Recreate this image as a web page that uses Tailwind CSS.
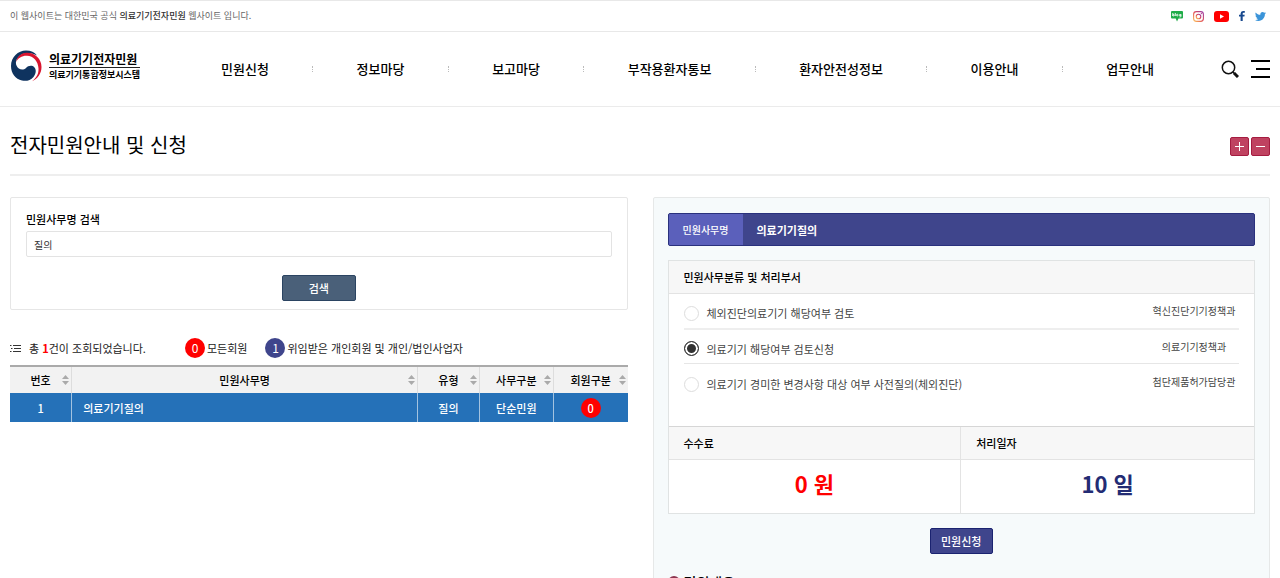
<!DOCTYPE html>
<html lang="ko">
<head>
  <meta charset="UTF-8">
  <meta name="viewport" content="width=device-width, initial-scale=1.0">
  <title>의료기기전자민원</title>
  <script src="https://cdn.jsdelivr.net/npm/@tailwindcss/browser@4"></script>
</head>
<body class="h-screen overflow-hidden bg-white font-['Noto_Sans_CJK_KR',sans-serif] text-[11px] leading-4 text-[#222]">

  <!-- top bar -->
  <div class="flex h-8 items-center justify-between border-t border-b border-t-[#e8e8e8] border-b-[#e8e8e8] pr-3.5 pl-2.5">
    <p class="text-[9px] text-[#666]">이 웹사이트는 대한민국 공식 <strong class="font-medium text-[#333]">의료기기전자민원</strong> 웹사이트 입니다.</p>
    <div class="flex items-center gap-2.5">
      <a href="#" aria-label="블로그">
        <svg class="h-3 w-3" viewBox="0 0 12 12"><path fill="#21ac49" d="M1 1h10q1 0 1 1v5.500q0 1-1 1H7.500L6 11.500 4.700 8.500H1q-1 0-1-1V2q0-1 1-1z"/><g fill="none" stroke="#fff" stroke-width=".9"><path d="M1.800 3v3M4.300 3v3"/><circle cx="2.600" cy="5.200" r=".7"/><circle cx="6.300" cy="5.100" r=".8"/><path d="M9.900 4.200v2.200q0 .8-1.400.6"/><circle cx="9.100" cy="5.100" r=".7"/></g></svg>
      </a>
      <a href="#" aria-label="인스타그램">
        <svg class="h-[11px] w-[11px]" viewBox="0 0 11 11" fill="none"><defs><linearGradient id="insta" x1="0" y1="1" x2="1" y2="0"><stop offset="0" stop-color="#fdc35b"/><stop offset=".5" stop-color="#df4b55"/><stop offset="1" stop-color="#963aa8"/></linearGradient></defs><rect x=".6" y=".6" width="9.800" height="9.800" rx="2.800" stroke="url(#insta)" stroke-width="1.100"/><circle cx="5.500" cy="5.500" r="2.300" stroke="url(#insta)" stroke-width="1.100"/><circle cx="8.400" cy="2.600" r=".7" fill="#b23b94"/></svg>
      </a>
      <a href="#" aria-label="유튜브">
        <svg class="h-[11px] w-[15px]" viewBox="0 0 15 11"><rect width="15" height="11" rx="3" fill="#f00"/><path fill="#fff" d="M6 3.200v4.600l4-2.300z"/></svg>
      </a>
      <a href="#" aria-label="페이스북">
        <svg class="h-2.5 w-1.5" viewBox="0 0 6 10"><path fill="#17488e" d="M1.600 10V5.600H0V3.800h1.600V2.500Q1.600 0 4 0h1.800v1.700H4.600q-.9 0-.9.900v1.200h2l-.3 1.800H3.700V10z"/></svg>
      </a>
      <a href="#" aria-label="트위터">
        <svg class="h-[11px] w-[11px]" viewBox="0 0 24 24"><path fill="#3b94d9" d="M23.950 4.570a10 10 0 0 1-2.820.77 4.960 4.960 0 0 0 2.160-2.720c-.95.550-2 .96-3.130 1.180a4.920 4.920 0 0 0-8.380 4.480C7.690 8.100 4.070 6.130 1.640 3.160a4.920 4.920 0 0 0 1.520 6.570 4.900 4.900 0 0 1-2.230-.61v.06a4.920 4.920 0 0 0 3.950 4.830 5 5 0 0 1-2.210.08 4.940 4.940 0 0 0 4.600 3.420A9.870 9.870 0 0 1 0 19.540a14 14 0 0 0 7.550 2.210c9.050 0 14-7.500 14-13.980l-.02-.64a9.940 9.940 0 0 0 2.420-2.560z"/></svg>
      </a>
    </div>
  </div>

  <!-- header -->
  <header class="flex h-[75px] items-center border-b border-[#ebebeb] px-2.5">
    <a href="#" class="flex w-[143px] items-center gap-[7px] pb-1.5 text-black">
      <svg class="h-8 w-8 shrink-0" viewBox="0 0 32 32">
        <path fill="#0f335f" d="M1 16C1 7 8 .5 16 .5c5 0 8.500 1.800 11 5C22 2.500 16 2 11.500 4.500 6.500 7.500 5 12 6.500 15.500c1.500 4 6.500 5.500 9.500 2.500 2-2.300 6-3.200 8.300-.8 2.400 2.500 1.600 6.800-.8 9.800-3 3.500-7.500 4.500-11.500 3.500C5.500 29 1 23.500 1 16z"/>
        <path fill="#d9152f" d="M6.300 12C6.500 7 11 3 16.500 2.800 25 2.500 31.500 9 31.500 17c0 6.500-4 12-9.500 14.300 4.500-3.300 6.800-7.800 6.500-12.800C28.200 11.500 23.500 6 17 5.800 12 5.600 8 8 6.300 12z"/>
      </svg>
      <span class="flex flex-col font-bold whitespace-nowrap">
        <span class="border-b border-[#222] text-[12px] leading-4">의료기기전자민원</span>
        <span class="text-[9px] leading-[14px]">의료기기통합정보시스템</span>
      </span>
    </a>
    <nav class="flex flex-1 items-center justify-between pr-[67px] pl-[68px] text-[13px] leading-5 font-medium text-black">
      <a href="#">민원신청</a>
      <span class="h-1.5 border-l border-dotted border-[#bbb]"></span>
      <a href="#">정보마당</a>
      <span class="h-1.5 border-l border-dotted border-[#bbb]"></span>
      <a href="#">보고마당</a>
      <span class="h-1.5 border-l border-dotted border-[#bbb]"></span>
      <a href="#">부작용환자통보</a>
      <span class="h-1.5 border-l border-dotted border-[#bbb]"></span>
      <a href="#">환자안전성정보</a>
      <span class="h-1.5 border-l border-dotted border-[#bbb]"></span>
      <a href="#">이용안내</a>
      <span class="h-1.5 border-l border-dotted border-[#bbb]"></span>
      <a href="#">업무안내</a>
    </nav>
    <div class="flex items-center gap-3">
      <button type="button" aria-label="검색 열기">
        <svg class="block h-[18px] w-[18px]" viewBox="0 0 18 18" fill="none" stroke="#111"><circle cx="7.500" cy="7.500" r="6.200" stroke-width="1.500"/><path d="M12 12l1.500 1.500" stroke-width="1.500"/><path d="M13 13l4 4" stroke-width="3"/></svg>
      </button>
      <button type="button" aria-label="전체 메뉴">
        <svg class="block h-[18px] w-[19px]" viewBox="0 0 19 18" stroke="#000" stroke-width="2"><path d="M0 1h19M5 9h14M0 17h19"/></svg>
      </button>
    </div>
  </header>

  <main class="px-2.5">
    <div class="flex h-[69px] items-center justify-between border-b-2 border-[#eee] pt-2">
      <h1 class="text-[20px] leading-7 text-black">전자민원안내 및 신청</h1>
      <div class="flex gap-0.5 pt-1">
        <button type="button" aria-label="확대" class="flex h-[19px] w-[19px] items-center justify-center rounded-xs border border-[#a51c40] bg-[#bf4260]">
          <svg class="h-[9px] w-[9px]" viewBox="0 0 9 9" stroke="#fff"><path d="M0 4.500h9M4.500 0v9"/></svg>
        </button>
        <button type="button" aria-label="축소" class="flex h-[19px] w-[19px] items-center justify-center rounded-xs border border-[#a51c40] bg-[#bf4260]">
          <svg class="h-[9px] w-[9px]" viewBox="0 0 9 9" stroke="#fff"><path d="M0 4.500h9"/></svg>
        </button>
      </div>
    </div>

    <div class="mt-[21px] grid grid-cols-2 gap-[25px]">
      <!-- search + result list -->
      <section>
        <form class="rounded-xs border border-[#e6e6e6] px-[15px] pt-[13px] pb-2">
          <label for="keyword" class="block font-medium text-black">민원사무명 검색</label>
          <input id="keyword" type="text" value="질의" class="mt-1 block h-[26px] w-full rounded-xs border border-[#e3e3e3] px-[7px] text-[10px] text-[#333]">
          <button type="button" class="mx-auto mt-[18px] block h-[26px] w-[74px] rounded-xs border border-[#2b4462] bg-[#4a6079] font-medium text-white">검색</button>
        </form>

        <div class="mt-7 flex h-5 items-center">
          <svg class="mr-2 h-[9px] w-[11px]" viewBox="0 0 11 9" stroke="#333"><path d="M3 1.500h8M4 4.500h7M3 7.500h8M0 1.500h1.500M1 4.500h1.500M0 7.500h1.500"/></svg>
          <p class="w-[156px]">총 <strong class="text-[#f00]">1</strong>건이 조회되었습니다.</p>
          <span class="mr-0.5 flex h-5 w-5 items-center justify-center rounded-full bg-[#f00] text-[12px] text-white">0</span>
          <span class="mr-[18px]">모든회원</span>
          <span class="mr-0.5 flex h-5 w-5 items-center justify-center rounded-full bg-[#3f458c] text-[12px] text-white">1</span>
          <span>위임받은 개인회원 및 개인/법인사업자</span>
        </div>

        <table class="mt-[7px] w-full table-fixed border-t-2 border-[#aaa] text-center">
          <colgroup>
            <col class="w-[10%]"><col><col class="w-[10%]"><col class="w-[12%]"><col class="w-[12%]">
          </colgroup>
          <thead class="bg-[#f2f2f2] text-black">
            <tr class="h-[27px]">
              <th class="relative border-r border-[#ddd] font-medium">번호<svg class="absolute top-2 right-0.5 h-2.5 w-[7px]" viewBox="0 0 7 10" fill="#aaa"><path d="M3.500 0L7 4H0zM3.500 10L0 6h7z"/></svg></th>
              <th class="relative border-r border-[#ddd] font-medium">민원사무명<svg class="absolute top-2 right-0.5 h-2.5 w-[7px]" viewBox="0 0 7 10" fill="#aaa"><path d="M3.500 0L7 4H0zM3.500 10L0 6h7z"/></svg></th>
              <th class="relative border-r border-[#ddd] font-medium">유형<svg class="absolute top-2 right-0.5 h-2.5 w-[7px]" viewBox="0 0 7 10" fill="#aaa"><path d="M3.500 0L7 4H0zM3.500 10L0 6h7z"/></svg></th>
              <th class="relative border-r border-[#ddd] font-medium">사무구분<svg class="absolute top-2 right-0.5 h-2.5 w-[7px]" viewBox="0 0 7 10" fill="#aaa"><path d="M3.500 0L7 4H0zM3.500 10L0 6h7z"/></svg></th>
              <th class="relative font-medium">회원구분<svg class="absolute top-2 right-0.5 h-2.5 w-[7px]" viewBox="0 0 7 10" fill="#aaa"><path d="M3.500 0L7 4H0zM3.500 10L0 6h7z"/></svg></th>
            </tr>
          </thead>
          <tbody class="bg-[#2571b8] font-medium text-white">
            <tr class="h-[29px]">
              <td class="border-r border-[#a3c3e0]">1</td>
              <td class="border-r border-[#a3c3e0] pl-[11px] text-left">의료기기질의</td>
              <td class="border-r border-[#a3c3e0]">질의</td>
              <td class="border-r border-[#a3c3e0]">단순민원</td>
              <td><span class="mx-auto flex h-5 w-5 items-center justify-center rounded-full bg-[#f00]">0</span></td>
            </tr>
          </tbody>
        </table>
      </section>

      <!-- detail -->
      <section class="rounded-xs border border-[#e6e8e8] bg-[#f6fafb] px-3.5 pt-[15px] pb-4">
        <div class="flex h-[33px] items-stretch overflow-hidden rounded-xs border border-[#2a317d] bg-[#3f458c] font-medium text-white">
          <span class="flex w-[74px] items-center justify-center bg-[#5b60bb] text-[10px]">민원사무명</span>
          <h2 class="flex items-center pl-3.5 font-bold">의료기기질의</h2>
        </div>

        <div class="mt-3.5 border border-[#e0e3e3] bg-white">
          <h3 class="flex h-[33px] items-center border-b border-[#e3e3e3] bg-[#f7f7f7] px-[15px] font-medium text-black">민원사무분류 및 처리부서</h3>
          <ul class="h-[132px] px-[15px] text-[#444]">
            <li class="flex h-9 items-center border-b-2 border-[#eee]">
              <input id="dept1" type="radio" name="dept" class="mt-1 mr-2 h-[15px] w-[15px] appearance-none rounded-full border border-[#ddd] bg-white checked:border-[#333] checked:bg-[#333] checked:inset-ring-2 checked:inset-ring-white">
              <label for="dept1" class="mt-1 flex-1">체외진단의료기기 해당여부 검토</label>
              <span class="w-[90px] text-center text-[10px]">혁신진단기기정책과</span>
            </li>
            <li class="flex h-[34px] items-center border-b border-[#e6e6e6]">
              <input id="dept2" type="radio" name="dept" checked class="mt-1 mr-2 h-[15px] w-[15px] appearance-none rounded-full border border-[#ddd] bg-white checked:border-[#333] checked:bg-[#333] checked:inset-ring-2 checked:inset-ring-white">
              <label for="dept2" class="mt-1 flex-1">의료기기 해당여부 검토신청</label>
              <span class="w-[90px] text-center text-[10px]">의료기기정책과</span>
            </li>
            <li class="flex h-9 items-center">
              <input id="dept3" type="radio" name="dept" class="mt-1 mr-2 h-[15px] w-[15px] appearance-none rounded-full border border-[#ddd] bg-white checked:border-[#333] checked:bg-[#333] checked:inset-ring-2 checked:inset-ring-white">
              <label for="dept3" class="mt-1 flex-1">의료기기 경미한 변경사항 대상 여부 사전질의(체외진단)</label>
              <span class="w-[90px] text-center text-[10px]">첨단제품허가담당관</span>
            </li>
          </ul>
          <dl class="grid grid-cols-2 border-t border-[#d6d6d6]">
            <div class="border-r border-[#e3e3e3]">
              <dt class="flex h-[33px] items-center border-b border-[#e3e3e3] bg-[#f7f7f7] px-[15px] font-medium text-black">수수료</dt>
              <dd class="flex h-[53px] items-center justify-center pb-2 text-[22px] font-bold text-[#f00]">0 원</dd>
            </div>
            <div>
              <dt class="flex h-[33px] items-center border-b border-[#e3e3e3] bg-[#f7f7f7] px-[15px] font-medium text-black">처리일자</dt>
              <dd class="flex h-[53px] items-center justify-center pb-2 text-[22px] font-bold text-[#232c74]">10 일</dd>
            </div>
          </dl>
        </div>

        <button type="button" class="mx-auto mt-3.5 block h-[26px] w-[63px] rounded-xs border border-[#1b2370] bg-[#3f458c] font-medium text-white">민원신청</button>
        <h3 class="mt-5 flex items-center gap-1 text-[14px] leading-4 font-medium text-black"><span class="h-3 w-3 rounded-full border-2 border-[#8d3550]"></span>민원내용</h3>
      </section>
    </div>
  </main>
</body>
</html>
